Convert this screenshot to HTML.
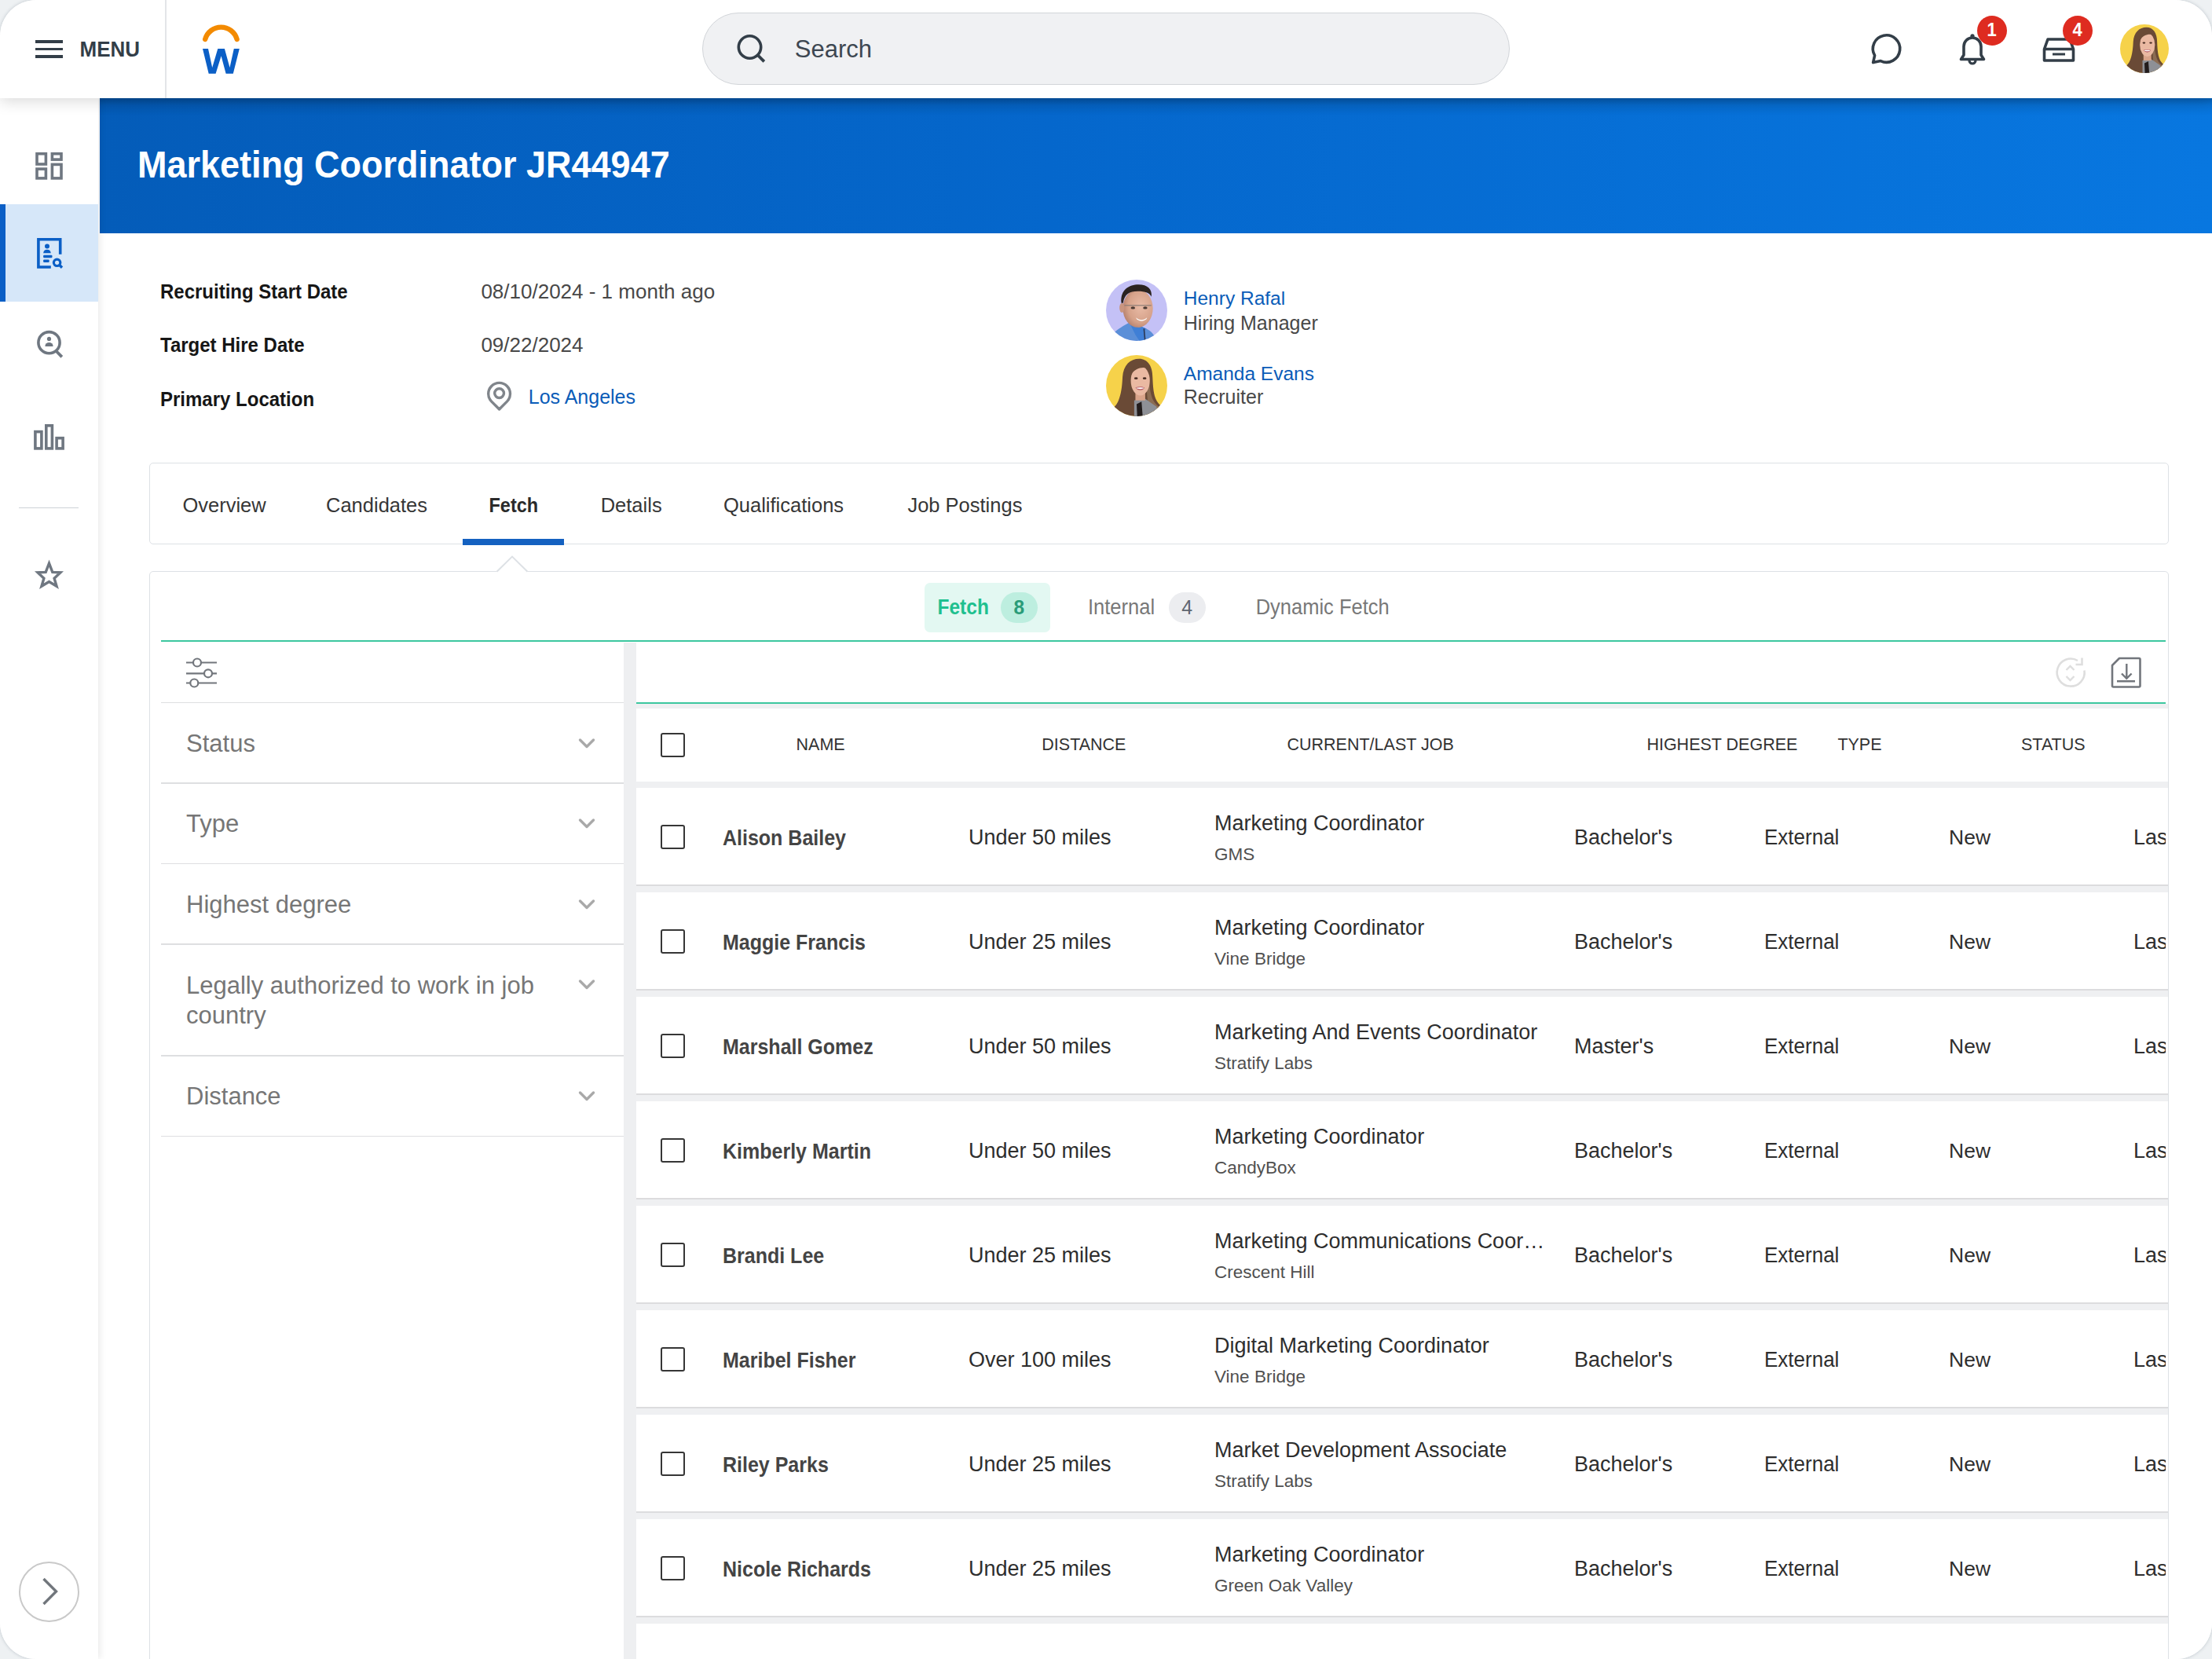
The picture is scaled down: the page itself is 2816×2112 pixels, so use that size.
<!DOCTYPE html>
<html><head><meta charset="utf-8"><title>Marketing Coordinator JR44947</title>
<style>
html,body{margin:0;padding:0;}
body{width:2816px;height:2112px;overflow:hidden;position:relative;background:#eef1f3;font-family:"Liberation Sans",sans-serif;}
#screen{position:absolute;left:0;top:0;width:2816px;height:2112px;background:#fff;border-radius:46px;overflow:hidden;box-shadow:0 0 4px rgba(40,60,80,0.25);}
.a{position:absolute;}
.t{position:absolute;line-height:1;white-space:nowrap;}
</style></head>
<body><div id="screen">
<div class="a" style="left:0px;top:0px;width:2816px;height:125px;background:#fff;box-shadow:0 4px 18px rgba(0,0,0,0.15);z-index:5;"></div>
<div class="a" style="left:0;top:0;width:2816px;height:125px;z-index:6"><div class="a" style="left:45px;top:51px;width:35px;height:3.7px;background:#333e48;"></div><div class="a" style="left:45px;top:60.8px;width:35px;height:3.7px;background:#333e48;"></div><div class="a" style="left:45px;top:70.2px;width:35px;height:3.7px;background:#333e48;"></div><div class="t" style="left:101.5px;top:50.1px;font-size:26px;font-weight:700;color:#333e48;transform:scaleY(1.05);transform-origin:0 22.01px;">MENU</div><div class="a" style="left:210px;top:0px;width:1.5px;height:125px;background:#e3e5e8;"></div><svg class="a" style="left:250px;top:24px" width="64" height="76" viewBox="250 24 64 76">
<path d="M261.2 49.9 A21 21 0 0 1 301.6 49.9" fill="none" stroke="#f38a00" stroke-width="6.4" stroke-linecap="round"/>
<path d="M258 62 L265 62 L270.2 86 L277.3 62 L285.9 62 L292.5 86 L297.8 62 L304.8 62 L296.8 93.8 L287.6 93.8 L281.6 71.2 L274.6 93.8 L265.7 93.8 Z" fill="#0b5fc6"/>
</svg><div class="a" style="left:894px;top:16px;width:1028px;height:92px;background:#f0f1f3;border:1.5px solid #d2d5d9;border-radius:46px;box-sizing:border-box;"></div><svg class="a" style="left:934px;top:40px" width="44" height="44" viewBox="934 40 44 44">
<circle cx="954.5" cy="60" r="14.2" fill="none" stroke="#333e48" stroke-width="3.6"/>
<path d="M965 70.5 L971.5 77" stroke="#333e48" stroke-width="3.8" stroke-linecap="square"/>
</svg><div class="t" style="left:1011.8px;top:47.1px;font-size:31px;color:#3d4751;">Search</div><svg class="a" style="left:2370px;top:35px" width="60" height="56" viewBox="2370 35 60 56">
<path d="M2386.6 70.6 A17.2 17.2 0 1 1 2394.2 77.6 L2384.6 79.6 Z" fill="none" stroke="#333e48" stroke-width="3.6" stroke-linejoin="round"/>
</svg><svg class="a" style="left:2488px;top:38px" width="46" height="50" viewBox="2488 38 46 50">
<path d="M2496.5 75.5 L2525.5 75.5 L2522 70 L2522 59 A11 11 0 0 0 2500 59 L2500 70 Z" fill="none" stroke="#333e48" stroke-width="3.6" stroke-linejoin="round"/>
<circle cx="2511" cy="45.8" r="2.6" fill="#333e48"/>
<path d="M2507 77 A4 4 0 0 0 2515 77" fill="none" stroke="#333e48" stroke-width="3.2"/>
</svg><svg class="a" style="left:2596px;top:42px" width="50" height="42" viewBox="2596 42 50 42">
<path d="M2602.5 77 L2602.5 62.5 L2607 50 L2635 50 L2639.5 62.5 L2639.5 77 Z M2602.5 62.5 L2639.5 62.5" fill="none" stroke="#333e48" stroke-width="3.6" stroke-linejoin="round"/>
<path d="M2613 69 L2629 69" stroke="#333e48" stroke-width="3.2"/>
</svg><div class="a" style="left:2517px;top:20px;width:38px;height:38px;background:#de2b20;border-radius:50%;"></div><div class="t" style="left:2529.5px;top:27.9px;font-size:22px;font-weight:700;color:#fff;transform:scaleY(1.08);transform-origin:0 18.62px;">1</div><div class="a" style="left:2626px;top:20px;width:38px;height:38px;background:#de2b20;border-radius:50%;"></div><div class="t" style="left:2638.5px;top:27.9px;font-size:22px;font-weight:700;color:#fff;transform:scaleY(1.08);transform-origin:0 18.62px;">4</div></div>
<div class="a" style="left:0px;top:125px;width:125px;height:1987px;background:#fff;box-shadow:2px 0 9px rgba(0,0,0,0.09);z-index:3;"></div>
<div class="a" style="left:0px;top:260px;width:125px;height:124px;background:#d6e7f9;z-index:4;"></div><div class="a" style="left:0px;top:260px;width:7px;height:124px;background:#0b5fc6;z-index:4;"></div><svg class="a" style="left:40px;top:188px;z-index:4" width="46" height="46" viewBox="40 188 46 46">
<g fill="none" stroke="#6f7781" stroke-width="3.6">
<rect x="47" y="195.7" width="11.4" height="13.3"/>
<rect x="66.4" y="195.7" width="11.6" height="7.4"/>
<rect x="47" y="215.1" width="11.4" height="11.8"/>
<rect x="66.4" y="209.4" width="11.6" height="17.5"/>
</g></svg><svg class="a" style="left:40px;top:296px;z-index:4" width="46" height="52" viewBox="40 296 46 52">
<g fill="none" stroke="#0b5fc6" stroke-width="3.6">
<path d="M64.8 340 L48.9 340 L48.9 304.8 L76.7 304.8 L76.7 323.8"/>
<circle cx="72.6" cy="334.3" r="4.2" stroke-width="3.2"/>
<path d="M75.6 337.3 L79 340.7" stroke-width="3.4"/>
</g>
<circle cx="60" cy="313.6" r="3" fill="#0b5fc6"/>
<path d="M55.1 322.3 A4.9 5.2 0 0 1 64.8 322.3 Z" fill="#0b5fc6"/>
<rect x="55.1" y="324.8" width="11.4" height="3.4" rx="1.2" fill="#0b5fc6"/>
<rect x="55.1" y="330.5" width="7.6" height="3.4" rx="1.2" fill="#0b5fc6"/>
</svg><svg class="a" style="left:40px;top:412px;z-index:4" width="46" height="50" viewBox="40 412 46 50">
<circle cx="62.5" cy="436.2" r="13.6" fill="none" stroke="#6f7781" stroke-width="3.6"/>
<path d="M71.8 447.2 L78.8 454.4" stroke="#6f7781" stroke-width="3.8"/>
<circle cx="62.5" cy="431.4" r="2.6" fill="#6f7781"/>
<path d="M57.4 440.9 A5.1 5 0 0 1 67.6 440.9 Z" fill="#6f7781"/>
</svg><svg class="a" style="left:38px;top:534px;z-index:4" width="50" height="44" viewBox="38 534 50 44">
<g fill="none" stroke="#6f7781" stroke-width="3.6">
<rect x="44.9" y="549.6" width="8" height="21.3"/>
<rect x="58.8" y="541.8" width="7.6" height="29.1"/>
<rect x="72.1" y="557.7" width="8" height="13.2"/>
</g></svg><div class="a" style="left:24px;top:645.5px;width:76px;height:1.5px;background:#cdd2d7;z-index:4;"></div><svg class="a" style="left:40px;top:708px;z-index:4" width="46" height="46" viewBox="40 708 46 46">
<path d="M62.50 717.17 L66.80 728.44 L76.92 728.72 L69.09 736.27 L72.05 746.30 L62.50 740.57 L52.95 746.30 L55.91 736.27 L48.08 728.72 L58.20 728.44 Z" fill="none" stroke="#6f7781" stroke-width="3.4" stroke-linejoin="miter"/>
</svg><div class="a" style="left:23.5px;top:1987.5px;width:77px;height:77px;border:2px solid #c9c9c9;border-radius:50%;box-sizing:border-box;z-index:4;"></div><svg class="a" style="left:45px;top:2005px;z-index:4" width="34" height="42" viewBox="45 2005 34 42">
<path d="M55.5 2010 L71.5 2026 L55.5 2042" fill="none" stroke="#71767c" stroke-width="3.4"/>
</svg>
<div class="a" style="left:127px;top:125px;width:2689px;height:172px;background:linear-gradient(90deg,#045cb9 0%,#0567cc 45%,#0877e0 100%);z-index:1;"></div>
<div class="a" style="left:127px;top:125px;width:2689px;height:22px;background:linear-gradient(180deg,rgba(0,0,0,0.20),rgba(0,0,0,0.06) 40%,rgba(0,0,0,0));z-index:2;"></div>
<div class="t" style="left:175.0px;top:187.9px;font-size:45px;font-weight:700;color:#fff;transform:scaleY(1.08);transform-origin:0 38.09px;z-index:2;">Marketing Coordinator JR44947</div>
<div class="t" style="left:204.0px;top:359.7px;font-size:24px;font-weight:700;color:#161616;transform:scaleY(1.08);transform-origin:0 20.32px;">Recruiting Start Date</div>
<div class="t" style="left:204.0px;top:427.7px;font-size:24px;font-weight:700;color:#161616;transform:scaleY(1.08);transform-origin:0 20.32px;">Target Hire Date</div>
<div class="t" style="left:204.0px;top:496.7px;font-size:24px;font-weight:700;color:#161616;transform:scaleY(1.08);transform-origin:0 20.32px;">Primary Location</div>
<div class="t" style="left:612.4px;top:358.0px;font-size:26px;color:#484848;">08/10/2024 - 1 month ago</div>
<div class="t" style="left:612.4px;top:426.0px;font-size:26px;color:#484848;">09/22/2024</div>
<svg class="a" style="left:615px;top:482px" width="42" height="46" viewBox="615 482 42 46">
<path d="M635.6 521 L625.75 511.1 A13.9 13.9 0 1 1 645.45 511.1 Z" fill="none" stroke="#80858b" stroke-width="3.4" stroke-linejoin="round"/>
<circle cx="635.6" cy="500.6" r="5.9" fill="none" stroke="#80858b" stroke-width="3.4"/>
</svg>
<div class="t" style="left:672.8px;top:492.8px;font-size:25px;color:#0a5cb8;">Los Angeles</div>
<svg class="a" style="left:1408px;top:356px" width="78" height="78" viewBox="-50 -50 100 100">
<defs><clipPath id="ch"><circle cx="0" cy="0" r="50"/></clipPath>
<radialGradient id="hf" cx="0.6" cy="0.45" r="0.6"><stop offset="0" stop-color="#e9bba6"/><stop offset="0.7" stop-color="#d6a28a"/><stop offset="1" stop-color="#b98470"/></radialGradient></defs>
<g clip-path="url(#ch)">
<rect x="-50" y="-50" width="100" height="100" fill="#c4c1f6"/>
<path d="M-40 52 L-38 38 C-30 30 -22 26 -12 20 L2 24 L16 30 C24 34 30 40 32 52 Z" fill="#5b8fd8"/>
<path d="M-12 20 L-2 40 L6 52 L14 52 L12 34 L16 30 L2 24 Z" fill="#3f7fd6"/>
<path d="M12 30 L14 52" stroke="#2a3550" stroke-width="2"/>
<path d="M-8 8 L-10 22 L4 28 L16 22 L16 8 Z" fill="#c48f78"/>
<ellipse cx="2" cy="-3" rx="24.5" ry="31" fill="url(#hf)"/>
<ellipse cx="-24" cy="-4" rx="4" ry="8" fill="#c99580"/>
<path d="M-25 -12 C-27 -34 -12 -42 3 -42 C18 -42 26 -34 24 -22 C22 -28 14 -31 2 -31 C-12 -31 -20 -26 -22 -12 Z" fill="#2b2320"/>
<path d="M-20 -8 L24 -8" stroke="#8d7d76" stroke-width="2" opacity="0.8"/>
<ellipse cx="-6" cy="-4" rx="3.5" ry="2" fill="#4a3a34"/>
<ellipse cx="14" cy="-4" rx="3.5" ry="2" fill="#4a3a34"/>
<path d="M-1 12 C4 17 12 17 17 12 L16 14.5 C11 18.5 5 18.5 0 14.5 Z" fill="#fff"/>
</g></svg>
<svg class="a" style="left:1408px;top:452px" width="78" height="78" viewBox="-50 -50 100 100">
<defs><clipPath id="ca1"><circle cx="0" cy="0" r="50"/></clipPath></defs>
<g clip-path="url(#ca1)">
<rect x="-50" y="-50" width="100" height="100" fill="#f6d24a"/>
<path d="M-38 36 C-28 28 -24 10 -23 -14 C-22 -34 -10 -44 4 -44 C18 -44 26 -32 26 -14 C27 8 28 24 40 33 L44 52 L-42 52 Z" fill="#6a4a36"/>
<path d="M20 -10 C22 10 24 26 36 34 L30 52 L22 52 C18 30 16 10 16 -10 Z" fill="#9a7a5e" opacity="0.7"/>
<path d="M-4 24 L12 20 L32 34 L40 52 L-4 52 Z" fill="#8e9096"/>
<path d="M0 30 L8 26 L10 52 L1 52 Z" fill="#221c1c"/>
<path d="M-2 6 L-2 24 L14 24 L14 6 Z" fill="#d9a48a"/>
<ellipse cx="6" cy="-8" rx="15.5" ry="24" fill="#eab9a2"/>
<path d="M-10 -24 C-4 -37 12 -38 21 -27 C12 -32 -2 -30 -9 -18 Z" fill="#6a4a36"/>
<ellipse cx="-1" cy="-12" rx="3" ry="1.8" fill="#4a2e24"/>
<ellipse cx="13" cy="-12" rx="3" ry="1.8" fill="#4a2e24"/>
<path d="M-2 3 C3 1 9 1 13 3 C11 9 1 9 -2 3 Z" fill="#b8606a"/>
<path d="M-1 3.5 C3 2.5 9 2.5 12 3.5 C10 6 2 6 -1 3.5 Z" fill="#fff"/>
</g></svg>
<div class="a" style="left:0;top:0;z-index:7"><svg class="a" style="left:2699px;top:31px" width="62" height="62" viewBox="-50 -50 100 100">
<defs><clipPath id="ca2"><circle cx="0" cy="0" r="50"/></clipPath></defs>
<g clip-path="url(#ca2)">
<rect x="-50" y="-50" width="100" height="100" fill="#f6d24a"/>
<path d="M-38 36 C-28 28 -24 10 -23 -14 C-22 -34 -10 -44 4 -44 C18 -44 26 -32 26 -14 C27 8 28 24 40 33 L44 52 L-42 52 Z" fill="#6a4a36"/>
<path d="M20 -10 C22 10 24 26 36 34 L30 52 L22 52 C18 30 16 10 16 -10 Z" fill="#9a7a5e" opacity="0.7"/>
<path d="M-4 24 L12 20 L32 34 L40 52 L-4 52 Z" fill="#8e9096"/>
<path d="M0 30 L8 26 L10 52 L1 52 Z" fill="#221c1c"/>
<path d="M-2 6 L-2 24 L14 24 L14 6 Z" fill="#d9a48a"/>
<ellipse cx="6" cy="-8" rx="15.5" ry="24" fill="#eab9a2"/>
<path d="M-10 -24 C-4 -37 12 -38 21 -27 C12 -32 -2 -30 -9 -18 Z" fill="#6a4a36"/>
<ellipse cx="-1" cy="-12" rx="3" ry="1.8" fill="#4a2e24"/>
<ellipse cx="13" cy="-12" rx="3" ry="1.8" fill="#4a2e24"/>
<path d="M-2 3 C3 1 9 1 13 3 C11 9 1 9 -2 3 Z" fill="#b8606a"/>
<path d="M-1 3.5 C3 2.5 9 2.5 12 3.5 C10 6 2 6 -1 3.5 Z" fill="#fff"/>
</g></svg></div>
<div class="t" style="left:1506.8px;top:368.3px;font-size:24.5px;color:#0a5cb8;">Henry Rafal</div>
<div class="t" style="left:1506.8px;top:398.8px;font-size:25px;color:#484848;">Hiring Manager</div>
<div class="t" style="left:1506.8px;top:463.8px;font-size:24.5px;color:#0a5cb8;">Amanda Evans</div>
<div class="t" style="left:1506.8px;top:492.8px;font-size:25px;color:#484848;">Recruiter</div>
<div class="a" style="left:189.6px;top:588.7px;width:2571.2px;height:104.3px;border:1.9px solid #dde1e5;border-radius:5px;box-sizing:border-box;background:#fff;"></div>
<div class="t" style="left:232.4px;top:631.4px;font-size:25.5px;color:#363636;">Overview</div>
<div class="t" style="left:415.0px;top:631.4px;font-size:25.5px;color:#363636;">Candidates</div>
<div class="t" style="left:764.7px;top:631.4px;font-size:25.5px;color:#363636;">Details</div>
<div class="t" style="left:921.0px;top:631.4px;font-size:25.5px;color:#363636;">Qualifications</div>
<div class="t" style="left:1155.4px;top:631.4px;font-size:25.5px;color:#363636;">Job Postings</div>
<div class="t" style="left:622.5px;top:632.6px;font-size:23.5px;font-weight:700;color:#2a2a2a;transform:scaleY(1.08);transform-origin:0 19.89px;">Fetch</div>
<div class="a" style="left:588.5px;top:686.3px;width:129.5px;height:8.2px;background:#1461c0;"></div>
<div class="a" style="left:189.6px;top:726.8px;width:2571.2px;height:1500px;border:1.9px solid #dde1e5;border-radius:5px;box-sizing:border-box;background:#fff;"></div>
<svg class="a" style="left:628px;top:704px;z-index:2" width="48" height="26" viewBox="628 704 48 26">
<path d="M632 727.75 L652 708.3 L672 727.75 Z" fill="#fff"/>
<rect x="633.5" y="726.5" width="37" height="3" fill="#fff"/>
<path d="M632.5 727.75 L652 708.5 L671.5 727.75" fill="none" stroke="#dde1e5" stroke-width="1.9" stroke-linejoin="miter"/>
</svg>
<div class="a" style="left:1177px;top:742px;width:160px;height:63px;background:#e3f8f2;border-radius:7px;"></div>
<div class="t" style="left:1193.5px;top:761.9px;font-size:24.5px;font-weight:700;color:#1fc08f;transform:scaleY(1.12);transform-origin:0 20.74px;">Fetch</div>
<div class="a" style="left:1274.3px;top:753.8px;width:47px;height:39px;background:#bdeedf;border-radius:20px;"></div>
<div class="t" style="left:1290.5px;top:761.9px;font-size:24.5px;font-weight:700;color:#2a9c78;transform:scaleY(1.08);transform-origin:0 20.74px;">8</div>
<div class="t" style="left:1385.0px;top:761.0px;font-size:25.5px;color:#787878;transform:scaleY(1.06);transform-origin:0 21.59px;">Internal</div>
<div class="a" style="left:1488px;top:753.8px;width:46.5px;height:39px;background:#ecedf0;border-radius:20px;"></div>
<div class="t" style="left:1504.3px;top:761.4px;font-size:25px;color:#5f6670;transform:scaleY(1.06);transform-origin:0 21.16px;">4</div>
<div class="t" style="left:1598.7px;top:761.0px;font-size:25.5px;color:#787878;transform:scaleY(1.06);transform-origin:0 21.59px;">Dynamic Fetch</div>
<div class="a" style="left:205px;top:815px;width:2552px;height:2.2px;background:#3cc79f;"></div>
<svg class="a" style="left:232px;top:833px" width="50" height="48" viewBox="232 833 50 48">
<g fill="none" stroke="#72767c" stroke-width="2.2">
<path d="M237 843.5 L246.5 843.5 M255.5 843.5 L276 843.5"/>
<circle cx="251" cy="843.5" r="5"/>
<path d="M237 857.3 L260.3 857.3 M269.7 857.3 L276 857.3"/>
<circle cx="265" cy="857.3" r="5"/>
<path d="M237 869.5 L242.5 869.5 M252 869.5 L276 869.5"/>
<circle cx="247.3" cy="869.5" r="5"/>
</g></svg>
<div class="a" style="left:205px;top:893.8000000000001px;width:589px;height:1.6px;background:#dedfe1;"></div>
<div class="a" style="left:205px;top:996.3000000000001px;width:589px;height:1.6px;background:#dedfe1;"></div>
<div class="a" style="left:205px;top:1098.9px;width:589px;height:1.6px;background:#dedfe1;"></div>
<div class="a" style="left:205px;top:1201.4px;width:589px;height:1.6px;background:#dedfe1;"></div>
<div class="a" style="left:205px;top:1343.2px;width:589px;height:1.6px;background:#dedfe1;"></div>
<div class="a" style="left:205px;top:1445.8px;width:589px;height:1.6px;background:#dedfe1;"></div>
<div class="t" style="left:237.0px;top:930.8px;font-size:31px;color:#767676;">Status</div>
<svg class="a" style="left:733px;top:936.5px" width="28" height="20" viewBox="0 0 28 20"><path d="M5.5 5 L14 13.5 L22.5 5" fill="none" stroke="#a9a9a9" stroke-width="3.4" stroke-linecap="round" stroke-linejoin="round"/></svg>
<div class="t" style="left:237.0px;top:1033.0px;font-size:31px;color:#767676;">Type</div>
<svg class="a" style="left:733px;top:1039px" width="28" height="20" viewBox="0 0 28 20"><path d="M5.5 5 L14 13.5 L22.5 5" fill="none" stroke="#a9a9a9" stroke-width="3.4" stroke-linecap="round" stroke-linejoin="round"/></svg>
<div class="t" style="left:237.0px;top:1136.1px;font-size:31px;color:#767676;">Highest degree</div>
<svg class="a" style="left:733px;top:1141.5px" width="28" height="20" viewBox="0 0 28 20"><path d="M5.5 5 L14 13.5 L22.5 5" fill="none" stroke="#a9a9a9" stroke-width="3.4" stroke-linecap="round" stroke-linejoin="round"/></svg>
<div class="t" style="left:237.0px;top:1238.7px;font-size:31px;color:#767676;">Legally authorized to work in job</div>
<svg class="a" style="left:733px;top:1244px" width="28" height="20" viewBox="0 0 28 20"><path d="M5.5 5 L14 13.5 L22.5 5" fill="none" stroke="#a9a9a9" stroke-width="3.4" stroke-linecap="round" stroke-linejoin="round"/></svg>
<div class="t" style="left:237.0px;top:1379.6px;font-size:31px;color:#767676;">Distance</div>
<svg class="a" style="left:733px;top:1385.8px" width="28" height="20" viewBox="0 0 28 20"><path d="M5.5 5 L14 13.5 L22.5 5" fill="none" stroke="#a9a9a9" stroke-width="3.4" stroke-linecap="round" stroke-linejoin="round"/></svg>
<div class="t" style="left:237.0px;top:1277.1px;font-size:31px;color:#767676;">country</div>
<div class="a" style="left:794px;top:818px;width:15.5px;height:1400px;background:#eeeff1;"></div>
<svg class="a" style="left:2610px;top:830px" width="52" height="52" viewBox="2610 830 52 52">
<path d="M2653.5 853.5 A17.5 17.5 0 1 1 2645 841" fill="none" stroke="#dedede" stroke-width="2.6"/>
<path d="M2650.5 837.5 L2650.5 846 L2642.5 846" fill="none" stroke="#dedede" stroke-width="2.6"/>
<path d="M2630.5 853 L2635.5 848 L2640.5 853 M2630.5 861 L2635.5 866 L2640.5 861" fill="none" stroke="#dedede" stroke-width="2.4"/>
</svg>
<svg class="a" style="left:2682px;top:831px" width="50" height="50" viewBox="2682 831 50 50">
<path d="M2689 847 L2698 838 L2723 838 A1.5 1.5 0 0 1 2724.5 839.5 L2724.5 873 A1.5 1.5 0 0 1 2723 874.5 L2690.5 874.5 A1.5 1.5 0 0 1 2689 873 Z" fill="none" stroke="#72767c" stroke-width="2.6" stroke-linejoin="round"/>
<path d="M2707.3 845 L2707.3 863.5 M2701 857.5 L2707.3 863.8 L2713.6 857.5 M2695 867.2 L2718 867.2" fill="none" stroke="#72767c" stroke-width="2.4"/>
</svg>
<div class="a" style="left:809.5px;top:893.5px;width:1947.5px;height:2.2px;background:#3cc79f;"></div>
<div class="a" style="left:809.5px;top:895.7px;width:1950px;height:6.3px;background:#eff0f2;"></div>
<div class="a" style="left:809.5px;top:995.2px;width:1950px;height:8.1px;background:#eff0f2;"></div>
<div class="a" style="left:841px;top:932.8px;width:31px;height:31px;border:2.2px solid #363636;border-radius:3px;box-sizing:border-box;background:#fff;"></div>
<div class="t" style="left:1013.6px;top:937.8px;font-size:21.5px;color:#333;">NAME</div>
<div class="t" style="left:1326.3px;top:937.8px;font-size:21.5px;color:#333;">DISTANCE</div>
<div class="t" style="left:1638.5px;top:937.8px;font-size:21.5px;color:#333;">CURRENT/LAST JOB</div>
<div class="t" style="left:2096.4px;top:937.8px;font-size:21.5px;color:#333;">HIGHEST DEGREE</div>
<div class="t" style="left:2339.4px;top:937.8px;font-size:21.5px;color:#333;">TYPE</div>
<div class="t" style="left:2573.0px;top:937.8px;font-size:21.5px;color:#333;">STATUS</div>
<div class="a" style="left:841px;top:1049.8px;width:31px;height:31px;border:2.2px solid #363636;border-radius:3px;box-sizing:border-box;background:#fff;"></div>
<div class="t" style="left:920.0px;top:1054.5px;font-size:25px;font-weight:700;color:#444444;transform:scaleY(1.1);transform-origin:0 21.16px;">Alison Bailey</div>
<div class="t" style="left:1233.0px;top:1052.8px;font-size:27px;color:#2e2e2e;">Under 50 miles</div>
<div class="t" style="left:1546.0px;top:1035.0px;font-size:27px;color:#2e2e2e;">Marketing Coordinator</div>
<div class="t" style="left:1546.0px;top:1076.9px;font-size:22.5px;color:#505050;">GMS</div>
<div class="t" style="left:2004.0px;top:1052.8px;font-size:27px;color:#2e2e2e;">Bachelor's</div>
<div class="t" style="left:2246.0px;top:1052.5px;font-size:26px;color:#2e2e2e;transform:scaleY(1.04);transform-origin:0 22.01px;">External</div>
<div class="t" style="left:2481.0px;top:1053.3px;font-size:26.5px;color:#2e2e2e;">New</div>
<div class="t" style="left:2716.0px;top:1052.8px;font-size:27px;color:#2e2e2e;width:41px;overflow:hidden;white-space:nowrap;">Last</div>
<div class="a" style="left:809.5px;top:1126.3px;width:1950px;height:10px;background:#eff0f2;"></div>
<div class="a" style="left:809.5px;top:1126.3px;width:1950px;height:1.3px;background:#dcdcde;"></div>
<div class="a" style="left:841px;top:1182.8px;width:31px;height:31px;border:2.2px solid #363636;border-radius:3px;box-sizing:border-box;background:#fff;"></div>
<div class="t" style="left:920.0px;top:1187.5px;font-size:25px;font-weight:700;color:#444444;transform:scaleY(1.1);transform-origin:0 21.16px;">Maggie Francis</div>
<div class="t" style="left:1233.0px;top:1185.8px;font-size:27px;color:#2e2e2e;">Under 25 miles</div>
<div class="t" style="left:1546.0px;top:1168.0px;font-size:27px;color:#2e2e2e;">Marketing Coordinator</div>
<div class="t" style="left:1546.0px;top:1209.9px;font-size:22.5px;color:#505050;">Vine Bridge</div>
<div class="t" style="left:2004.0px;top:1185.8px;font-size:27px;color:#2e2e2e;">Bachelor's</div>
<div class="t" style="left:2246.0px;top:1185.5px;font-size:26px;color:#2e2e2e;transform:scaleY(1.04);transform-origin:0 22.01px;">External</div>
<div class="t" style="left:2481.0px;top:1186.3px;font-size:26.5px;color:#2e2e2e;">New</div>
<div class="t" style="left:2716.0px;top:1185.8px;font-size:27px;color:#2e2e2e;width:41px;overflow:hidden;white-space:nowrap;">Last</div>
<div class="a" style="left:809.5px;top:1259.3px;width:1950px;height:10px;background:#eff0f2;"></div>
<div class="a" style="left:809.5px;top:1259.3px;width:1950px;height:1.3px;background:#dcdcde;"></div>
<div class="a" style="left:841px;top:1315.8px;width:31px;height:31px;border:2.2px solid #363636;border-radius:3px;box-sizing:border-box;background:#fff;"></div>
<div class="t" style="left:920.0px;top:1320.5px;font-size:25px;font-weight:700;color:#444444;transform:scaleY(1.1);transform-origin:0 21.16px;">Marshall Gomez</div>
<div class="t" style="left:1233.0px;top:1318.8px;font-size:27px;color:#2e2e2e;">Under 50 miles</div>
<div class="t" style="left:1546.0px;top:1301.0px;font-size:27px;color:#2e2e2e;">Marketing And Events Coordinator</div>
<div class="t" style="left:1546.0px;top:1342.9px;font-size:22.5px;color:#505050;">Stratify Labs</div>
<div class="t" style="left:2004.0px;top:1318.8px;font-size:27px;color:#2e2e2e;">Master's</div>
<div class="t" style="left:2246.0px;top:1318.5px;font-size:26px;color:#2e2e2e;transform:scaleY(1.04);transform-origin:0 22.01px;">External</div>
<div class="t" style="left:2481.0px;top:1319.3px;font-size:26.5px;color:#2e2e2e;">New</div>
<div class="t" style="left:2716.0px;top:1318.8px;font-size:27px;color:#2e2e2e;width:41px;overflow:hidden;white-space:nowrap;">Last</div>
<div class="a" style="left:809.5px;top:1392.3px;width:1950px;height:10px;background:#eff0f2;"></div>
<div class="a" style="left:809.5px;top:1392.3px;width:1950px;height:1.3px;background:#dcdcde;"></div>
<div class="a" style="left:841px;top:1448.8px;width:31px;height:31px;border:2.2px solid #363636;border-radius:3px;box-sizing:border-box;background:#fff;"></div>
<div class="t" style="left:920.0px;top:1453.5px;font-size:25px;font-weight:700;color:#444444;transform:scaleY(1.1);transform-origin:0 21.16px;">Kimberly Martin</div>
<div class="t" style="left:1233.0px;top:1451.8px;font-size:27px;color:#2e2e2e;">Under 50 miles</div>
<div class="t" style="left:1546.0px;top:1434.0px;font-size:27px;color:#2e2e2e;">Marketing Coordinator</div>
<div class="t" style="left:1546.0px;top:1475.9px;font-size:22.5px;color:#505050;">CandyBox</div>
<div class="t" style="left:2004.0px;top:1451.8px;font-size:27px;color:#2e2e2e;">Bachelor's</div>
<div class="t" style="left:2246.0px;top:1451.5px;font-size:26px;color:#2e2e2e;transform:scaleY(1.04);transform-origin:0 22.01px;">External</div>
<div class="t" style="left:2481.0px;top:1452.3px;font-size:26.5px;color:#2e2e2e;">New</div>
<div class="t" style="left:2716.0px;top:1451.8px;font-size:27px;color:#2e2e2e;width:41px;overflow:hidden;white-space:nowrap;">Last</div>
<div class="a" style="left:809.5px;top:1525.3px;width:1950px;height:10px;background:#eff0f2;"></div>
<div class="a" style="left:809.5px;top:1525.3px;width:1950px;height:1.3px;background:#dcdcde;"></div>
<div class="a" style="left:841px;top:1581.8px;width:31px;height:31px;border:2.2px solid #363636;border-radius:3px;box-sizing:border-box;background:#fff;"></div>
<div class="t" style="left:920.0px;top:1586.5px;font-size:25px;font-weight:700;color:#444444;transform:scaleY(1.1);transform-origin:0 21.16px;">Brandi Lee</div>
<div class="t" style="left:1233.0px;top:1584.8px;font-size:27px;color:#2e2e2e;">Under 25 miles</div>
<div class="t" style="left:1546.0px;top:1567.0px;font-size:27px;color:#2e2e2e;">Marketing Communications Coor…</div>
<div class="t" style="left:1546.0px;top:1608.9px;font-size:22.5px;color:#505050;">Crescent Hill</div>
<div class="t" style="left:2004.0px;top:1584.8px;font-size:27px;color:#2e2e2e;">Bachelor's</div>
<div class="t" style="left:2246.0px;top:1584.5px;font-size:26px;color:#2e2e2e;transform:scaleY(1.04);transform-origin:0 22.01px;">External</div>
<div class="t" style="left:2481.0px;top:1585.3px;font-size:26.5px;color:#2e2e2e;">New</div>
<div class="t" style="left:2716.0px;top:1584.8px;font-size:27px;color:#2e2e2e;width:41px;overflow:hidden;white-space:nowrap;">Last</div>
<div class="a" style="left:809.5px;top:1658.3px;width:1950px;height:10px;background:#eff0f2;"></div>
<div class="a" style="left:809.5px;top:1658.3px;width:1950px;height:1.3px;background:#dcdcde;"></div>
<div class="a" style="left:841px;top:1714.8px;width:31px;height:31px;border:2.2px solid #363636;border-radius:3px;box-sizing:border-box;background:#fff;"></div>
<div class="t" style="left:920.0px;top:1719.5px;font-size:25px;font-weight:700;color:#444444;transform:scaleY(1.1);transform-origin:0 21.16px;">Maribel Fisher</div>
<div class="t" style="left:1233.0px;top:1717.8px;font-size:27px;color:#2e2e2e;">Over 100 miles</div>
<div class="t" style="left:1546.0px;top:1700.0px;font-size:27px;color:#2e2e2e;">Digital Marketing Coordinator</div>
<div class="t" style="left:1546.0px;top:1741.9px;font-size:22.5px;color:#505050;">Vine Bridge</div>
<div class="t" style="left:2004.0px;top:1717.8px;font-size:27px;color:#2e2e2e;">Bachelor's</div>
<div class="t" style="left:2246.0px;top:1717.5px;font-size:26px;color:#2e2e2e;transform:scaleY(1.04);transform-origin:0 22.01px;">External</div>
<div class="t" style="left:2481.0px;top:1718.3px;font-size:26.5px;color:#2e2e2e;">New</div>
<div class="t" style="left:2716.0px;top:1717.8px;font-size:27px;color:#2e2e2e;width:41px;overflow:hidden;white-space:nowrap;">Last</div>
<div class="a" style="left:809.5px;top:1791.3px;width:1950px;height:10px;background:#eff0f2;"></div>
<div class="a" style="left:809.5px;top:1791.3px;width:1950px;height:1.3px;background:#dcdcde;"></div>
<div class="a" style="left:841px;top:1847.8px;width:31px;height:31px;border:2.2px solid #363636;border-radius:3px;box-sizing:border-box;background:#fff;"></div>
<div class="t" style="left:920.0px;top:1852.5px;font-size:25px;font-weight:700;color:#444444;transform:scaleY(1.1);transform-origin:0 21.16px;">Riley Parks</div>
<div class="t" style="left:1233.0px;top:1850.8px;font-size:27px;color:#2e2e2e;">Under 25 miles</div>
<div class="t" style="left:1546.0px;top:1833.0px;font-size:27px;color:#2e2e2e;">Market Development Associate</div>
<div class="t" style="left:1546.0px;top:1874.9px;font-size:22.5px;color:#505050;">Stratify Labs</div>
<div class="t" style="left:2004.0px;top:1850.8px;font-size:27px;color:#2e2e2e;">Bachelor's</div>
<div class="t" style="left:2246.0px;top:1850.5px;font-size:26px;color:#2e2e2e;transform:scaleY(1.04);transform-origin:0 22.01px;">External</div>
<div class="t" style="left:2481.0px;top:1851.3px;font-size:26.5px;color:#2e2e2e;">New</div>
<div class="t" style="left:2716.0px;top:1850.8px;font-size:27px;color:#2e2e2e;width:41px;overflow:hidden;white-space:nowrap;">Last</div>
<div class="a" style="left:809.5px;top:1924.3px;width:1950px;height:10px;background:#eff0f2;"></div>
<div class="a" style="left:809.5px;top:1924.3px;width:1950px;height:1.3px;background:#dcdcde;"></div>
<div class="a" style="left:841px;top:1980.8px;width:31px;height:31px;border:2.2px solid #363636;border-radius:3px;box-sizing:border-box;background:#fff;"></div>
<div class="t" style="left:920.0px;top:1985.5px;font-size:25px;font-weight:700;color:#444444;transform:scaleY(1.1);transform-origin:0 21.16px;">Nicole Richards</div>
<div class="t" style="left:1233.0px;top:1983.8px;font-size:27px;color:#2e2e2e;">Under 25 miles</div>
<div class="t" style="left:1546.0px;top:1966.0px;font-size:27px;color:#2e2e2e;">Marketing Coordinator</div>
<div class="t" style="left:1546.0px;top:2007.9px;font-size:22.5px;color:#505050;">Green Oak Valley</div>
<div class="t" style="left:2004.0px;top:1983.8px;font-size:27px;color:#2e2e2e;">Bachelor's</div>
<div class="t" style="left:2246.0px;top:1983.5px;font-size:26px;color:#2e2e2e;transform:scaleY(1.04);transform-origin:0 22.01px;">External</div>
<div class="t" style="left:2481.0px;top:1984.3px;font-size:26.5px;color:#2e2e2e;">New</div>
<div class="t" style="left:2716.0px;top:1983.8px;font-size:27px;color:#2e2e2e;width:41px;overflow:hidden;white-space:nowrap;">Last</div>
<div class="a" style="left:809.5px;top:2057.3px;width:1950px;height:10px;background:#eff0f2;"></div>
<div class="a" style="left:809.5px;top:2057.3px;width:1950px;height:1.3px;background:#dcdcde;"></div>
<div class="a" style="left:2761px;top:560px;width:55px;height:1552px;background:#fff;"></div>
</div></body></html>
